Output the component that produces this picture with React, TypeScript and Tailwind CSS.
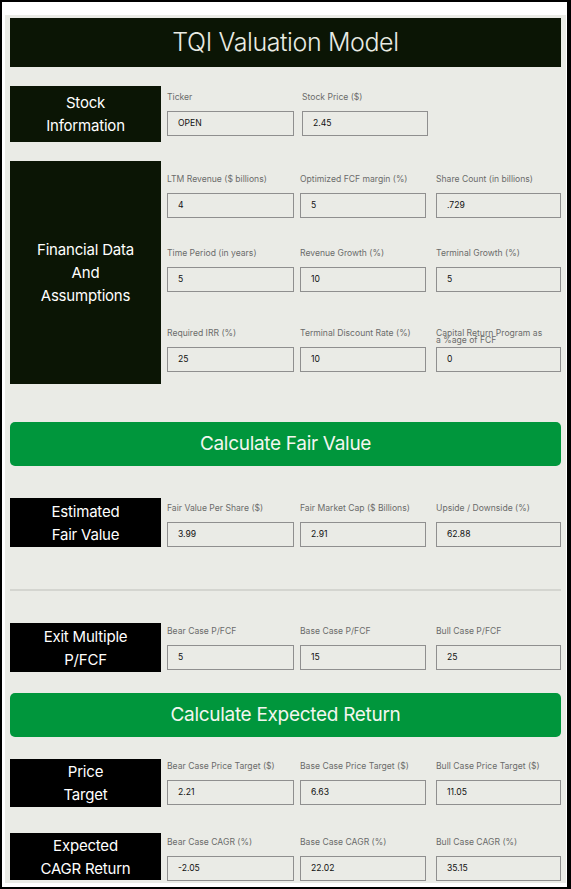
import React from "react";

type Field = { label: string; value: string };

const FONT = { fontFamily: "Inter, 'Noto Sans', sans-serif" };

function Input({ label, value, className = "" }: Field & { className?: string }) {
  return (
    <div className={`flex flex-col ${className}`}>
      <span className="h-[12px] text-[8.6px] leading-[12px] text-[#6b6b6b] whitespace-nowrap">{label}</span>
      <div className="mt-[8px] flex h-[25px] items-center border border-[#8f8f8f] pl-[10px] text-[8.6px] text-[#111]">
        {value}
      </div>
    </div>
  );
}

function SideBox({ lines, dark, className = "" }: { lines: string[]; dark?: boolean; className?: string }) {
  return (
    <div
      className={`flex w-[151px] shrink-0 flex-col items-center justify-center text-center text-[15px] leading-[23px] tracking-[-0.2px] text-white ${
        dark ? "bg-[#0b1505]" : "bg-black"
      } ${className}`}
    >
      {lines.map((l) => (
        <span key={l}>{l}</span>
      ))}
    </div>
  );
}

function Row3({ fields, top = 6 }: { fields: Field[]; top?: number }) {
  return (
    <div className="ml-[6px] grid grid-cols-[133px_136px_125px]" style={{ paddingTop: top }}>
      {fields.map((f) => (
        <Input key={f.label} {...f} className={f === fields[2] ? "w-[125px]" : f === fields[1] ? "w-[126px]" : "w-[127px]"} />
      ))}
    </div>
  );
}

export default function App() {
  return (
    <div className="h-[889px] w-[571px] bg-white" style={FONT}>
      <div className="h-full border-b-2 border-l-2 border-r-4 border-t-2 border-black bg-white pb-[2px] pl-[3px] pr-[1px] pt-[13px]">
        <div className="h-[868px] bg-[#eaebe6] px-[5px] pt-[3px]" style={{ width: 561 }}>
          <div className="flex h-[49px] items-center justify-center bg-[#0b1505] text-[25px] font-light tracking-[-0.4px] text-[#e9ebe3]">
            TQI Valuation Model
          </div>

          <div className="mt-[19px] flex items-start">
            <SideBox dark lines={["Stock", "Information"]} className="h-[56px]" />
            <div className="ml-[6px] flex pt-[5px]">
              <Input label="Ticker" value="OPEN" className="w-[127px]" />
              <Input label="Stock Price ($)" value="2.45" className="ml-[8px] w-[126px]" />
            </div>
          </div>

          <div className="mt-[19px] flex items-start">
            <SideBox dark lines={["Financial Data", "And", "Assumptions"]} className="h-[223px]" />
            <div className="flex flex-col">
              <Row3
                top={12}
                fields={[
                  { label: "LTM Revenue ($ billions)", value: "4" },
                  { label: "Optimized FCF margin (%)", value: "5" },
                  { label: "Share Count (in billions)", value: ".729" },
                ]}
              />
              <div className="mt-[29px]">
                <Row3
                  top={0}
                  fields={[
                    { label: "Time Period (in years)", value: "5" },
                    { label: "Revenue Growth (%)", value: "10" },
                    { label: "Terminal Growth (%)", value: "5" },
                  ]}
                />
              </div>
              <div className="ml-[6px] mt-[35px] grid grid-cols-[133px_136px_125px]">
                <Input label="Required IRR (%)" value="25" className="w-[127px]" />
                <Input label="Terminal Discount Rate (%)" value="10" className="w-[126px]" />
                <div className="flex w-[125px] flex-col">
                  <span className="mt-[3px] h-[12px] whitespace-pre text-[8.6px] leading-[7px] text-[#6b6b6b]">
                    {"Capital Return Program as\na %age of FCF"}
                  </span>
                  <div className="mt-[5px] flex h-[25px] items-center border border-[#8f8f8f] pl-[10px] text-[8.6px] text-[#111]">
                    0
                  </div>
                </div>
              </div>
            </div>
          </div>

          <button className="mt-[38px] flex h-[44px] w-full items-center justify-center rounded-[5px] bg-[#00963c] text-[19px] tracking-[-0.3px] text-[#f3f6ef]">
            Calculate Fair Value
          </button>

          <div className="mt-[32px] flex items-start">
            <SideBox lines={["Estimated", "Fair Value"]} className="h-[49px] w-[150px]" />
            <Row3
              top={4}
              fields={[
                { label: "Fair Value Per Share ($)", value: "3.99" },
                { label: "Fair Market Cap ($ Billions)", value: "2.91" },
                { label: "Upside / Downside (%)", value: "62.88" },
              ]}
            />
          </div>

          <div className="mt-[42px] h-[2px] bg-[#d4d5d0]" />

          <div className="mt-[32px] flex items-start">
            <SideBox lines={["Exit Multiple", "P/FCF"]} className="h-[49px]" />
            <Row3
              top={2}
              fields={[
                { label: "Bear Case P/FCF", value: "5" },
                { label: "Base Case P/FCF", value: "15" },
                { label: "Bull Case P/FCF", value: "25" },
              ]}
            />
          </div>

          <button className="mt-[21px] flex h-[44px] w-full items-center justify-center rounded-[5px] bg-[#00963c] text-[19px] tracking-[-0.3px] text-[#f3f6ef]">
            Calculate Expected Return
          </button>

          <div className="mt-[22px] flex items-start">
            <SideBox lines={["Price", "Target"]} className="h-[48px]" />
            <Row3
              top={1}
              fields={[
                { label: "Bear Case Price Target ($)", value: "2.21" },
                { label: "Base Case Price Target ($)", value: "6.63" },
                { label: "Bull Case Price Target ($)", value: "11.05" },
              ]}
            />
          </div>

          <div className="mt-[26px] flex items-start">
            <SideBox lines={["Expected", "CAGR Return"]} className="h-[47px]" />
            <Row3
              top={3}
              fields={[
                { label: "Bear Case CAGR (%)", value: "-2.05" },
                { label: "Base Case CAGR (%)", value: "22.02" },
                { label: "Bull Case CAGR (%)", value: "35.15" },
              ]}
            />
          </div>
        </div>
      </div>
    </div>
  );
}
